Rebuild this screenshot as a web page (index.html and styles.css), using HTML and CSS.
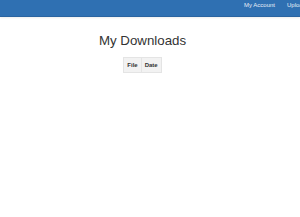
FILE: index.html
```html
<!DOCTYPE html>
<html lang="en">
<head>
  <meta charset="UTF-8">
  <title>My Downloads</title>
  <link rel="stylesheet" href="styles.css">
</head>
<body>
  <div class="navbar">
    <a href="#">My Account</a>
    <a href="#">Upload</a>
  </div>
  <div class="main">
    <h1>My Downloads</h1>
    <table class="downloads">
      <tr>
        <th>File</th>
        <th>Date</th>
      </tr>
    </table>
  </div>
</body>
</html>
```

FILE: styles.css
```css
body {
  margin: 0;
  font-family: "Liberation Sans", Arial, sans-serif;
  color: #333;
  background-color: #fff;
  overflow: hidden;
}
.navbar {
  height: 16px;
  background-color: #2f70b2;
  border-bottom: 1px solid #2a64a0;
  display: flex;
  gap: 12px;
  padding-left: 244px;
  white-space: nowrap;
  box-shadow: 0 1px 2px rgba(0, 0, 0, 0.08);
}
.navbar a {
  color: #e8eef6;
  text-decoration: none;
  font-size: 6px;
  line-height: 10px;
}
.main {
  width: 285px;
  display: flex;
  flex-direction: column;
  align-items: center;
}
h1 {
  font-size: 13.3px;
  font-weight: normal;
  margin: 16px 0 8px;
  line-height: 16px;
}
.downloads {
  border-collapse: collapse;
}
.downloads th {
  font-size: 6px;
  font-weight: bold;
  background-color: #f2f2f2;
  border: 1px solid #e4e4e4;
  padding: 4px 3px;
  color: #333;
}
```
